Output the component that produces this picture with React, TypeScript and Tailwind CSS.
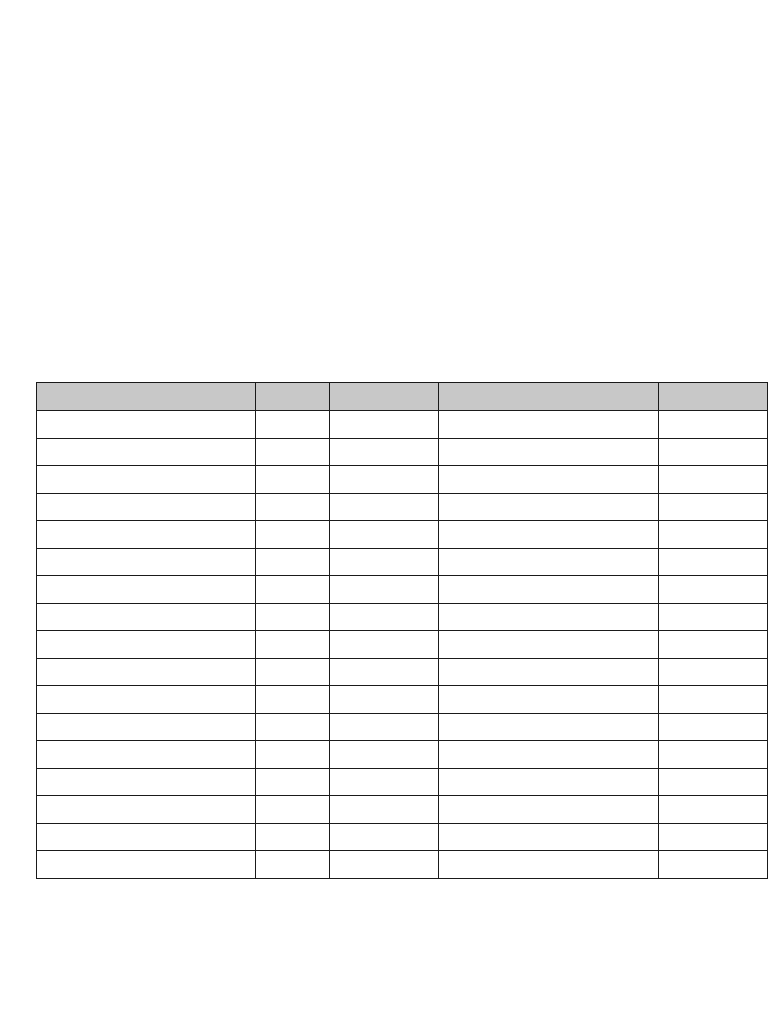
import React from "react";

const cols = ["w-[219px]", "w-[74px]", "w-[109px]", "w-[220px]", "w-[109px]"];

function Row({ header }: { header?: boolean }) {
  return (
    <div className={`flex ${header ? "h-[28px] bg-[#c8c8c8]" : "h-[27.5px] bg-white"}`}>
      {cols.map((c, i) => (
        <div key={i} className={`${c} shrink-0 border-r border-b border-[#1a1a1a]`} />
      ))}
    </div>
  );
}

export default function App() {
  return (
    <div className="w-[768px] h-[1024px] bg-white overflow-hidden pt-[382px] pl-[36px]" style={{ fontFamily: '"Liberation Sans", Arial, sans-serif' }}>
      <div className="w-[732px] border-t border-l border-[#1a1a1a] flex flex-col">
        <Row header />
        {Array.from({ length: 17 }).map((_, i) => (
          <Row key={i} />
        ))}
      </div>
    </div>
  );
}
